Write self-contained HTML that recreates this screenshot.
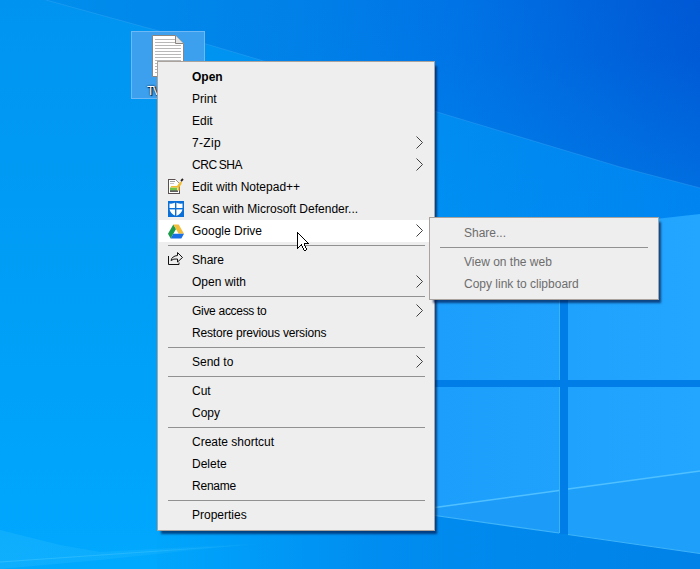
<!DOCTYPE html>
<html><head><meta charset="utf-8">
<style>
html,body{margin:0;padding:0;width:700px;height:569px;overflow:hidden;background:#0b8ce6;}
body{position:relative;font-family:"Liberation Sans",sans-serif;font-size:12px;}
#bg{position:absolute;left:0;top:0;}
.menu{position:absolute;background:#eeeeee;border:1px solid #aaa29c;box-shadow:3px 4px 2px -1px rgba(0,20,70,0.65);}
#m1{left:157px;top:61px;width:276px;height:468px;}
#m2{left:429px;top:217px;width:228px;height:81px;}
.it{position:absolute;left:0;width:100%;height:22px;line-height:22px;color:#000;white-space:nowrap;}
.it span{position:absolute;left:34px;}
.hl{background:#ffffff;left:1px;}
.hl span{left:33px;}
.sep{position:absolute;left:10px;width:257px;height:1px;background:#919191;}
.arr{position:absolute;left:258px;top:0;}
.dis{color:#6d6d6d;}
</style></head><body>
<svg id="bg" width="700" height="569" viewBox="0 0 700 569">
  <defs>
    <linearGradient id="gBase" x1="0" y1="0" x2="0" y2="569" gradientUnits="userSpaceOnUse">
      <stop offset="0" stop-color="#0094f0"/>
      <stop offset="0.5" stop-color="#009ef6"/>
      <stop offset="1" stop-color="#00a8fe"/>
    </linearGradient>
    <linearGradient id="gBaseH" x1="157" y1="0" x2="700" y2="0" gradientUnits="userSpaceOnUse">
      <stop offset="0" stop-color="#0050e6" stop-opacity="0"/>
      <stop offset="0.7" stop-color="#0050e6" stop-opacity="0.22"/>
      <stop offset="1" stop-color="#0050e6" stop-opacity="0.3"/>
    </linearGradient>
    <linearGradient id="gTop" x1="46" y1="0" x2="700" y2="0" gradientUnits="userSpaceOnUse">
      <stop offset="0" stop-color="#008eec"/>
      <stop offset="0.39" stop-color="#0080e8"/>
      <stop offset="0.62" stop-color="#0074e6"/>
      <stop offset="0.92" stop-color="#005dd8"/>
      <stop offset="1" stop-color="#0058d5"/>
    </linearGradient>
    <linearGradient id="gPane" x1="435" y1="0" x2="700" y2="0" gradientUnits="userSpaceOnUse">
      <stop offset="0" stop-color="#1c9efc"/>
      <stop offset="1" stop-color="#22a6ff"/>
    </linearGradient>
    <linearGradient id="gFloor" x1="157" y1="0" x2="700" y2="0" gradientUnits="userSpaceOnUse">
      <stop offset="0" stop-color="#00a6fc"/>
      <stop offset="0.42" stop-color="#008cf0"/>
      <stop offset="1" stop-color="#0082e8"/>
    </linearGradient>
    <linearGradient id="gTopV" x1="0" y1="0" x2="0" y2="190" gradientUnits="userSpaceOnUse">
      <stop offset="0" stop-color="#0090f0" stop-opacity="0"/>
      <stop offset="0.3" stop-color="#0090f0" stop-opacity="0.05"/>
      <stop offset="1" stop-color="#0090f0" stop-opacity="0.4"/>
    </linearGradient>
    <linearGradient id="gRay" x1="0" y1="0" x2="260" y2="0" gradientUnits="userSpaceOnUse">
      <stop offset="0" stop-color="#60d4ff" stop-opacity="0.35"/>
      <stop offset="0.6" stop-color="#60d4ff" stop-opacity="0.25"/>
      <stop offset="1" stop-color="#60d4ff" stop-opacity="0"/>
    </linearGradient>
  </defs>
  <rect x="0" y="0" width="700" height="569" fill="url(#gBase)"/>
  <rect x="0" y="0" width="700" height="569" fill="url(#gBaseH)"/>
  <polygon points="46,0 206,44 437,112 620,167 700,188 700,0" fill="url(#gTop)"/>
  <polygon points="46,0 206,44 437,112 620,167 700,188 700,0" fill="url(#gTopV)"/>
  <polyline points="46,0 206,44 437,112 620,167 700,188" fill="none" stroke="#3aa8f4" stroke-width="1" stroke-opacity="0.4"/>
  <!-- floor -->
  <polygon points="157,475 559,533 568,534 700,553 700,569 157,569" fill="url(#gFloor)"/>
  <polygon points="0,530 60,545 100,552 260,543 100,560 0,569" fill="url(#gRay)" fill-opacity="0.45"/>
  <line x1="0" y1="562" x2="260" y2="544" stroke="url(#gRay)" stroke-width="1"/>
  <!-- panes -->
  <polygon points="435,244 559,230 559,380 435,380" fill="url(#gPane)"/>
  <polygon points="568,229 660,218.5 700,214 700,380 568,380" fill="url(#gPane)"/>
  <rect x="560" y="230" width="8" height="304" fill="#007de6"/>
  <rect x="559" y="230" width="1" height="303" fill="#3ab4fc"/>
  <rect x="435" y="380" width="265" height="7" fill="#007de6"/>
  <polygon points="435,387 559,387 559,533 435,515" fill="url(#gPane)"/>
  <polygon points="568,387 700,387 700,553 568,534" fill="url(#gPane)"/>
  <polygon points="435,507.5 559,490.5 559,532.5 435,515" fill="#1c9cf8"/>
  <polygon points="568,489 700,471 700,553 568,534" fill="#1ea0fa"/>
  <line x1="435" y1="507.5" x2="559" y2="490.5" stroke="#50c0ff" stroke-width="1.5"/>
  <line x1="568" y1="489" x2="700" y2="471" stroke="#50c0ff" stroke-width="1.5"/>
  <line x1="435" y1="515.5" x2="559" y2="533" stroke="#40b4f8" stroke-width="1.2"/>
  <line x1="568" y1="534.5" x2="700" y2="553.5" stroke="#40b4f8" stroke-width="1.2"/>
  <!-- desktop icon selection -->
  <rect x="131.5" y="31.5" width="73" height="67" fill="#3ca0ee" stroke="#6eb9f5" stroke-width="1"/>
  <!-- file icon -->
  <path d="M152.5,35.5 H175.5 L183.5,43.5 V76.5 H152.5 Z" fill="#ffffff" stroke="#8a8580"/>
  <path d="M175.5,35.5 V43.5 H183.5" fill="#e4e4e4" stroke="#8a8580"/>
  <g stroke="#b8b8b8" stroke-width="1"><line x1="155" y1="39.5" x2="175" y2="39.5"/><line x1="155" y1="42.5" x2="175" y2="42.5"/><line x1="155" y1="45.5" x2="181" y2="45.5"/><line x1="155" y1="48.5" x2="181" y2="48.5"/><line x1="155" y1="51.5" x2="181" y2="51.5"/><line x1="155" y1="54.5" x2="181" y2="54.5"/><line x1="155" y1="57.5" x2="181" y2="57.5"/><line x1="155" y1="60.5" x2="181" y2="60.5"/><line x1="155" y1="63.5" x2="181" y2="63.5"/><line x1="155" y1="66.5" x2="181" y2="66.5"/><line x1="155" y1="69.5" x2="181" y2="69.5"/><line x1="155" y1="72.5" x2="181" y2="72.5"/></g>
</svg>
<div style="position:absolute;left:147px;top:84px;color:#fff;font-size:12px;line-height:14px;letter-spacing:-1.5px;text-shadow:1px 1px 1px #000,0 0 2px #002;">TV</div>

<div class="menu" id="m1">
  <div class="it" style="top:4px"><span style="font-weight:bold">Open</span></div>
  <div class="it" style="top:26px"><span>Print</span></div>
  <div class="it" style="top:48px"><span>Edit</span></div>
  <div class="it" style="top:70px"><span style="letter-spacing:0.35px">7-Zip</span></div>
  <div class="it" style="top:92px"><span style="letter-spacing:-0.4px;word-spacing:-1px">CRC SHA</span></div>
  <div class="it" style="top:114px"><span>Edit with Notepad++</span></div>
  <div class="it" style="top:136px"><span>Scan with Microsoft Defender...</span></div>
  <div class="it hl" style="top:158px"><span>Google Drive</span></div>
  <div class="sep" style="top:183px"></div>
  <div class="it" style="top:187px"><span>Share</span></div>
  <div class="it" style="top:209px"><span>Open with</span></div>
  <div class="sep" style="top:234px"></div>
  <div class="it" style="top:238px"><span style="letter-spacing:-0.3px">Give access to</span></div>
  <div class="it" style="top:260px"><span style="letter-spacing:-0.18px">Restore previous versions</span></div>
  <div class="sep" style="top:285px"></div>
  <div class="it" style="top:289px"><span>Send to</span></div>
  <div class="sep" style="top:314px"></div>
  <div class="it" style="top:318px"><span>Cut</span></div>
  <div class="it" style="top:340px"><span>Copy</span></div>
  <div class="sep" style="top:365px"></div>
  <div class="it" style="top:369px"><span>Create shortcut</span></div>
  <div class="it" style="top:391px"><span>Delete</span></div>
  <div class="it" style="top:413px"><span style="letter-spacing:-0.23px">Rename</span></div>
  <div class="sep" style="top:438px"></div>
  <div class="it" style="top:442px"><span>Properties</span></div>
</div>

<div class="menu" id="m2">
  <div class="it dis" style="top:4px"><span>Share...</span></div>
  <div class="sep" style="top:29px;width:208px;"></div>
  <div class="it dis" style="top:33px"><span>View on the web</span></div>
  <div class="it dis" style="top:55px"><span>Copy link to clipboard</span></div>
</div>

<svg id="ov" width="700" height="569" viewBox="0 0 700 569" style="position:absolute;left:0;top:0;">
  <!-- chevrons -->
  <g fill="none" stroke="#404040" stroke-width="1">
    <polyline points="416.5,136.5 422.5,142.5 416.5,148.5"/>
    <polyline points="416.5,158.5 422.5,164.5 416.5,170.5"/>
    <polyline points="416.5,224.5 422.5,230.5 416.5,236.5"/>
    <polyline points="416.5,275.5 422.5,281.5 416.5,287.5"/>
    <polyline points="416.5,304.5 422.5,310.5 416.5,316.5"/>
    <polyline points="416.5,355.5 422.5,361.5 416.5,367.5"/>
  </g>
  <!-- notepad++ -->
  <g>
    <rect x="168.5" y="179.5" width="11" height="14" fill="#ffffff" stroke="#5a5050"/>
    <polygon points="175,179 180,179 180,184" fill="#eeeeee"/>
    <path d="M175.5,179.5 L179.5,183.5" stroke="#9a9590" stroke-width="1"/>
    <rect x="170" y="181" width="5" height="1" fill="#a0a0a0"/>
    <rect x="170" y="183" width="4" height="1" fill="#c8c8c8"/>
    <rect x="170" y="187.5" width="7" height="3" fill="#6cc44a"/>
    <rect x="170" y="190.5" width="8" height="1.2" fill="#1a1a1a"/>
    <path d="M171,186 H177 L179.5,182.5 L182,181 L181.5,184 L179.5,187 V190.5 H177.5 V187.5 H171 Z" fill="#f2bc30"/>
    <path d="M181,181 L183,179" stroke="#2a2222" stroke-width="1.8"/>
  </g>
  <!-- defender -->
  <g>
    <rect x="168" y="201" width="16" height="16" fill="#0a70d8"/>
    <path d="M169.5,203.5 Q172.5,204 175.5,202.5 Q178.5,204 182.5,203.5 L182.5,209 Q182,213.5 176,216 Q170,213.5 169.5,209 Z" fill="#ffffff"/>
    <rect x="175" y="202" width="1.4" height="14.5" fill="#0a70d8"/>
    <rect x="169" y="208" width="14" height="1.4" fill="#0a70d8"/>
  </g>
  <!-- google drive -->
  <g transform="translate(168,224.5)">
    <polygon points="5.33,0 8,4.62 2.67,14 0,9.33" fill="#1e9a4a"/>
    <polygon points="5.33,0 10.67,0 16,9.33 10.67,9.33" fill="#f2be3c"/>
    <polygon points="2.67,14 13.33,14 16,9.33 5.33,9.33" fill="#1a6ee6"/>
  </g>
  <!-- share -->
  <g fill="none" stroke="#111" stroke-width="1">
    <path d="M168.5,256 V264.5 H179 V262.5"/>
    <path d="M171,260.5 Q172,256 177.5,255.5 V252.5 L182.5,257.5 L177.5,262 V259 Q173.5,258.5 171,260.5 Z"/>
  </g>
  <!-- cursor -->
  <g shape-rendering="crispEdges"><rect x="297" y="232" width="1" height="1" fill="#000"/><rect x="297" y="233" width="1" height="1" fill="#000"/><rect x="298" y="233" width="1" height="1" fill="#000"/><rect x="297" y="234" width="1" height="1" fill="#000"/><rect x="298" y="234" width="1" height="1" fill="#fff"/><rect x="299" y="234" width="1" height="1" fill="#000"/><rect x="297" y="235" width="1" height="1" fill="#000"/><rect x="298" y="235" width="1" height="1" fill="#fff"/><rect x="299" y="235" width="1" height="1" fill="#fff"/><rect x="300" y="235" width="1" height="1" fill="#000"/><rect x="297" y="236" width="1" height="1" fill="#000"/><rect x="298" y="236" width="1" height="1" fill="#fff"/><rect x="299" y="236" width="1" height="1" fill="#fff"/><rect x="300" y="236" width="1" height="1" fill="#fff"/><rect x="301" y="236" width="1" height="1" fill="#000"/><rect x="297" y="237" width="1" height="1" fill="#000"/><rect x="298" y="237" width="1" height="1" fill="#fff"/><rect x="299" y="237" width="1" height="1" fill="#fff"/><rect x="300" y="237" width="1" height="1" fill="#fff"/><rect x="301" y="237" width="1" height="1" fill="#fff"/><rect x="302" y="237" width="1" height="1" fill="#000"/><rect x="297" y="238" width="1" height="1" fill="#000"/><rect x="298" y="238" width="1" height="1" fill="#fff"/><rect x="299" y="238" width="1" height="1" fill="#fff"/><rect x="300" y="238" width="1" height="1" fill="#fff"/><rect x="301" y="238" width="1" height="1" fill="#fff"/><rect x="302" y="238" width="1" height="1" fill="#fff"/><rect x="303" y="238" width="1" height="1" fill="#000"/><rect x="297" y="239" width="1" height="1" fill="#000"/><rect x="298" y="239" width="1" height="1" fill="#fff"/><rect x="299" y="239" width="1" height="1" fill="#fff"/><rect x="300" y="239" width="1" height="1" fill="#fff"/><rect x="301" y="239" width="1" height="1" fill="#fff"/><rect x="302" y="239" width="1" height="1" fill="#fff"/><rect x="303" y="239" width="1" height="1" fill="#fff"/><rect x="304" y="239" width="1" height="1" fill="#000"/><rect x="297" y="240" width="1" height="1" fill="#000"/><rect x="298" y="240" width="1" height="1" fill="#fff"/><rect x="299" y="240" width="1" height="1" fill="#fff"/><rect x="300" y="240" width="1" height="1" fill="#fff"/><rect x="301" y="240" width="1" height="1" fill="#fff"/><rect x="302" y="240" width="1" height="1" fill="#fff"/><rect x="303" y="240" width="1" height="1" fill="#fff"/><rect x="304" y="240" width="1" height="1" fill="#fff"/><rect x="305" y="240" width="1" height="1" fill="#000"/><rect x="297" y="241" width="1" height="1" fill="#000"/><rect x="298" y="241" width="1" height="1" fill="#fff"/><rect x="299" y="241" width="1" height="1" fill="#fff"/><rect x="300" y="241" width="1" height="1" fill="#fff"/><rect x="301" y="241" width="1" height="1" fill="#fff"/><rect x="302" y="241" width="1" height="1" fill="#fff"/><rect x="303" y="241" width="1" height="1" fill="#fff"/><rect x="304" y="241" width="1" height="1" fill="#fff"/><rect x="305" y="241" width="1" height="1" fill="#fff"/><rect x="306" y="241" width="1" height="1" fill="#000"/><rect x="297" y="242" width="1" height="1" fill="#000"/><rect x="298" y="242" width="1" height="1" fill="#fff"/><rect x="299" y="242" width="1" height="1" fill="#fff"/><rect x="300" y="242" width="1" height="1" fill="#fff"/><rect x="301" y="242" width="1" height="1" fill="#fff"/><rect x="302" y="242" width="1" height="1" fill="#fff"/><rect x="303" y="242" width="1" height="1" fill="#fff"/><rect x="304" y="242" width="1" height="1" fill="#fff"/><rect x="305" y="242" width="1" height="1" fill="#fff"/><rect x="306" y="242" width="1" height="1" fill="#fff"/><rect x="307" y="242" width="1" height="1" fill="#000"/><rect x="297" y="243" width="1" height="1" fill="#000"/><rect x="298" y="243" width="1" height="1" fill="#fff"/><rect x="299" y="243" width="1" height="1" fill="#fff"/><rect x="300" y="243" width="1" height="1" fill="#fff"/><rect x="301" y="243" width="1" height="1" fill="#fff"/><rect x="302" y="243" width="1" height="1" fill="#fff"/><rect x="303" y="243" width="1" height="1" fill="#fff"/><rect x="304" y="243" width="1" height="1" fill="#000"/><rect x="305" y="243" width="1" height="1" fill="#000"/><rect x="306" y="243" width="1" height="1" fill="#000"/><rect x="307" y="243" width="1" height="1" fill="#000"/><rect x="308" y="243" width="1" height="1" fill="#000"/><rect x="297" y="244" width="1" height="1" fill="#000"/><rect x="298" y="244" width="1" height="1" fill="#fff"/><rect x="299" y="244" width="1" height="1" fill="#fff"/><rect x="300" y="244" width="1" height="1" fill="#fff"/><rect x="301" y="244" width="1" height="1" fill="#000"/><rect x="302" y="244" width="1" height="1" fill="#fff"/><rect x="303" y="244" width="1" height="1" fill="#fff"/><rect x="304" y="244" width="1" height="1" fill="#000"/><rect x="297" y="245" width="1" height="1" fill="#000"/><rect x="298" y="245" width="1" height="1" fill="#fff"/><rect x="299" y="245" width="1" height="1" fill="#fff"/><rect x="300" y="245" width="1" height="1" fill="#000"/><rect x="301" y="245" width="1" height="1" fill="#000"/><rect x="302" y="245" width="1" height="1" fill="#fff"/><rect x="303" y="245" width="1" height="1" fill="#fff"/><rect x="304" y="245" width="1" height="1" fill="#000"/><rect x="297" y="246" width="1" height="1" fill="#000"/><rect x="298" y="246" width="1" height="1" fill="#fff"/><rect x="299" y="246" width="1" height="1" fill="#000"/><rect x="302" y="246" width="1" height="1" fill="#000"/><rect x="303" y="246" width="1" height="1" fill="#fff"/><rect x="304" y="246" width="1" height="1" fill="#fff"/><rect x="305" y="246" width="1" height="1" fill="#000"/><rect x="297" y="247" width="1" height="1" fill="#000"/><rect x="298" y="247" width="1" height="1" fill="#000"/><rect x="302" y="247" width="1" height="1" fill="#000"/><rect x="303" y="247" width="1" height="1" fill="#fff"/><rect x="304" y="247" width="1" height="1" fill="#fff"/><rect x="305" y="247" width="1" height="1" fill="#000"/><rect x="297" y="248" width="1" height="1" fill="#000"/><rect x="303" y="248" width="1" height="1" fill="#000"/><rect x="304" y="248" width="1" height="1" fill="#fff"/><rect x="305" y="248" width="1" height="1" fill="#fff"/><rect x="306" y="248" width="1" height="1" fill="#000"/><rect x="303" y="249" width="1" height="1" fill="#000"/><rect x="304" y="249" width="1" height="1" fill="#fff"/><rect x="305" y="249" width="1" height="1" fill="#fff"/><rect x="306" y="249" width="1" height="1" fill="#000"/><rect x="304" y="250" width="1" height="1" fill="#000"/><rect x="305" y="250" width="1" height="1" fill="#000"/></g>
</svg>
</body></html>
